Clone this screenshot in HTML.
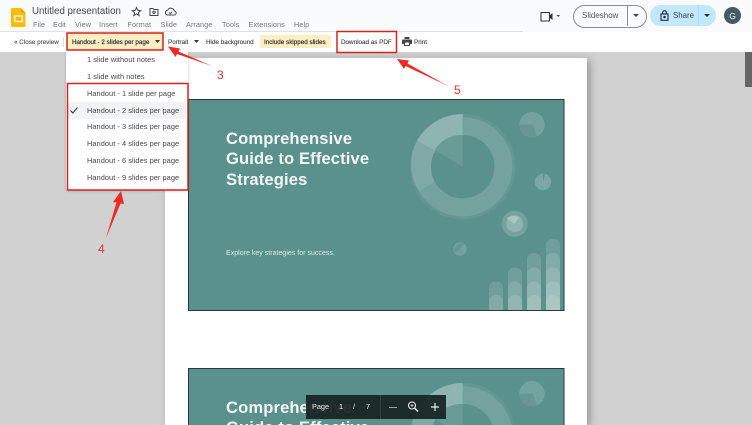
<!DOCTYPE html>
<html><head><meta charset="utf-8">
<style>
html,body{margin:0;padding:0;width:752px;height:425px;overflow:hidden;background:#d1d1d1;font-family:"Liberation Sans",sans-serif}
#w{position:relative;width:752px;height:425px;overflow:hidden;background:#d1d1d1}
.t{position:absolute;white-space:nowrap;line-height:1}
.box{position:absolute}
.mi{position:absolute;left:87px;font-size:7.400px;color:#444746;white-space:nowrap;line-height:10px;letter-spacing:.05px}
.m{font-size:7.400px;color:#7a7d80;top:19.500px;position:absolute;line-height:10px;letter-spacing:.02px}
.tb{position:absolute;font-size:6.300px;color:#3c4043;top:37.500px;line-height:9px;white-space:nowrap;-webkit-text-stroke:.12px #3c4043}
.st{position:absolute;left:226px;font-weight:bold;font-size:16.600px;color:#f3f8f7;white-space:nowrap;line-height:20px;letter-spacing:.12px}
</style></head><body><div id="w">
<div class="box" style="left:0;top:0;width:752px;height:32px;background:#f9fbfd"></div>
<div class="box" style="left:0;top:32px;width:752px;height:20px;background:#fff"></div>
<div class="box" style="left:0;top:31px;width:523px;height:1px;background:#dfe1e5"></div>

<svg class="box" style="left:11px;top:8px" width="15" height="19" viewBox="0 0 15 19"><path d="M1.500 0H10l4.500 4.500V17.500a1.500 1.500 0 0 1-1.500 1.500H1.500A1.500 1.500 0 0 1 0 17.500V1.500A1.500 1.500 0 0 1 1.500 0z" fill="#fbbc04"/><path d="M10 0v4.500h4.500z" fill="#e8a302"/><rect x="3.700" y="8" width="7.600" height="5.500" fill="none" stroke="#fff" stroke-width="1.200"/></svg>
<div class="t" style="left:32px;top:6.500px;font-size:9.700px;color:#444746">Untitled presentation</div>
<svg class="box" style="left:131px;top:6px" width="46" height="11" viewBox="0 0 46 11" fill="none" stroke="#444" stroke-width="1"><path d="M5.500 1.500l1.200 2.800 3 .3-2.300 2 .7 3-2.600-1.600-2.600 1.600.7-3-2.300-2 3-.3z"/><path d="M19 2.500h3l1 1h4v6h-8z"/><circle cx="23" cy="6.300" r="1.200"/><path d="M36 9h7a2 2 0 0 0 .3-4 3.500 3.500 0 0 0-6.600-.8A2.500 2.500 0 0 0 36 9z"/><path d="M38 6.500l1.300 1.200 2-2"/></svg>
<div class="m" style="left:33px">File</div>
<div class="m" style="left:53px">Edit</div>
<div class="m" style="left:75px">View</div>
<div class="m" style="left:99px">Insert</div>
<div class="m" style="left:127.500px">Format</div>
<div class="m" style="left:160.500px">Slide</div>
<div class="m" style="left:186px">Arrange</div>
<div class="m" style="left:222px">Tools</div>
<div class="m" style="left:248.500px">Extensions</div>
<div class="m" style="left:294px">Help</div>

<!-- right header -->
<svg class="box" style="left:540px;top:10px" width="22" height="12" viewBox="0 0 22 12"><path d="M1 2.500h8.500v8.500H1z" fill="none" stroke="#333" stroke-width="1.100"/><path d="M9.500 5.500l3-2.500v7l-3-2.500z" fill="#333"/><path d="M16.500 5h3.500l-1.750 2z" fill="#444"/></svg>
<div class="box" style="left:573px;top:5px;width:72px;height:20.500px;border:1px solid #8a8d90;border-radius:12px;background:#f9fbfd"></div>
<div class="box" style="left:627px;top:5px;width:1px;height:21px;background:#8a8d90"></div>
<div class="t" style="left:582px;top:12px;font-size:7.900px;color:#555;letter-spacing:.05px">Slideshow</div>
<svg class="box" style="left:633px;top:14px" width="6" height="4"><path d="M0 0h6L3 3z" fill="#444"/></svg>
<div class="box" style="left:650px;top:5px;width:66px;height:21px;border-radius:11px;background:#c2e7ff"></div>
<div class="box" style="left:698px;top:5px;width:1px;height:21px;background:#b3dcf7"></div>
<svg class="box" style="left:660px;top:10px" width="9" height="11" viewBox="0 0 9 11" fill="none" stroke="#1c2b33" stroke-width="1.100"><rect x="1" y="4" width="7" height="6.300"/><path d="M2.700 4V2.500a1.800 1.800 0 0 1 3.600 0V4"/><circle cx="4.500" cy="7" r=".7" fill="#1c2b33"/></svg>
<div class="t" style="left:673px;top:12px;font-size:7.900px;color:#38474f">Share</div>
<svg class="box" style="left:704px;top:14px" width="6" height="4"><path d="M0 0h6L3 3z" fill="#1c2b33"/></svg>
<div class="box" style="left:724px;top:7px;width:17px;height:17px;border-radius:50%;background:#445a65"></div>
<div class="t" style="left:724px;top:11.500px;width:17px;text-align:center;font-size:8.500px;color:#fff">G</div>

<!-- toolbar -->
<div class="tb" style="left:14px;color:#555">« Close preview</div>
<div class="box" style="left:63px;top:37px;width:1px;height:10px;background:#dadce0"></div>
<div class="box" style="left:67px;top:33px;width:96px;height:17px;background:#fdefc3"></div>
<div class="tb" style="left:72px;font-size:6.300px;color:#333;-webkit-text-stroke:.2px #333">Handout - 2 slides per page</div>
<svg class="box" style="left:155px;top:40px" width="5" height="3"><path d="M0 0h5L2.500 3z" fill="#333"/></svg>
<div class="tb" style="left:168px">Portrait</div>
<svg class="box" style="left:194px;top:40px" width="5" height="3"><path d="M0 0h5L2.500 3z" fill="#333"/></svg>
<div class="tb" style="left:206px">Hide background</div>
<div class="box" style="left:260px;top:35px;width:71px;height:13px;background:#fdefc3"></div>
<div class="tb" style="left:264px;color:#333;-webkit-text-stroke:.2px #333">Include skipped slides</div>
<div class="tb" style="left:341px">Download as PDF</div>
<svg class="box" style="left:402px;top:37px" width="10" height="9" viewBox="0 0 10 9"><path d="M2.500 0h5v2h-5zM1 2.500h8a1 1 0 0 1 1 1V7H8v2H2V7H0V3.500a1 1 0 0 1 1-1z" fill="#444"/><rect x="3" y="5.500" width="4" height="2.500" fill="#fff"/></svg>
<div class="tb" style="left:414px">Print</div>

<!-- page -->
<div class="box" style="left:165px;top:58px;width:422px;height:367px;background:#fff;box-shadow:3px 2px 8px rgba(0,0,0,.28);clip-path:inset(-10px -12px 0 -10px)"></div>
<div class="box" style="left:745px;top:52px;width:7px;height:35px;background:#666"></div>

<!-- slides -->
<svg class="box" style="left:188px;top:99px" width="377" height="326" viewBox="0 0 377 326">
<defs>
<clipPath id="c"><rect x="0" y="0" width="376" height="211"/></clipPath>
<g id="g">
<rect x=".5" y=".5" width="375.500" height="211" fill="#5b918d" stroke="#263a3a" stroke-width="1"/>
<circle cx="274.700" cy="67.700" r="52.700" fill="#659792"/>
<path d="M274.700 18A49.700 49.700 0 0 1 274.700 117.400 49.700 49.700 0 0 1 231 92L274.700 67.700z" fill="#74a29e"/>
<path d="M274.700 15A52.700 52.700 0 0 0 229 41.700L274.700 67.700z" fill="#8fb5b2"/>
<path d="M229 41.700A49.700 49.700 0 0 0 231 92L274.700 67.700z" fill="#80aaa7"/>
<circle cx="274.700" cy="67.700" r="31.700" fill="#5b918d"/>
<path d="M274.700 36V67.700L246.500 51A31.700 31.700 0 0 1 274.700 36z" fill="#6a9b97"/>
<circle cx="344" cy="25.700" r="12.700" fill="#74a29e"/>
<path d="M331.500 26l13-.5 4.500 12A12.700 12.700 0 0 1 331.500 26z" fill="#669793"/>
<circle cx="355" cy="83" r="8.200" fill="#7aa7a3"/>
<path d="M355 83v-8l2 .3z" fill="#5b918d"/>
<circle cx="326.700" cy="124.700" r="13" fill="#74a29e"/>
<circle cx="326.700" cy="124.700" r="8.500" fill="#8fb5b2"/>
<path d="M326.700 124.700l-8-5a9 9 0 0 1 12-1z" fill="#a7c5c2"/>
<circle cx="272" cy="150" r="6.700" fill="#74a29e"/>
<path d="M272 150l-5 4a6.700 6.700 0 0 1 8-9z" fill="#669793"/>
<g fill="#fff" fill-opacity=".13" clip-path="url(#c)">
<rect x="301" y="196" width="14" height="40" rx="6.500"/><rect x="301" y="182.500" width="14" height="50" rx="6.500"/>
<rect x="320" y="196" width="14" height="40" rx="6.500"/><rect x="320" y="182.500" width="14" height="50" rx="6.500"/><rect x="320" y="168.500" width="14" height="60" rx="6.500"/>
<rect x="339" y="196" width="14" height="40" rx="6.500"/><rect x="339" y="182.500" width="14" height="50" rx="6.500"/><rect x="339" y="168.500" width="14" height="60" rx="6.500"/><rect x="339" y="154" width="14" height="80" rx="6.500"/>
<rect x="358" y="196" width="14" height="40" rx="6.500"/><rect x="358" y="182.500" width="14" height="50" rx="6.500"/><rect x="358" y="168.500" width="14" height="60" rx="6.500"/><rect x="358" y="154" width="14" height="80" rx="6.500"/><rect x="358" y="140" width="14" height="90" rx="6.500"/>
</g>
</g>
</defs>
<use href="#g"/>
<use href="#g" y="269"/>
</svg>
<div class="st" style="top:129px">Comprehensive</div>
<div class="st" style="top:149px">Guide to Effective</div>
<div class="st" style="top:169.500px">Strategies</div>
<div class="t" style="left:226px;top:250px;font-size:7.050px;color:#dce9e7">Explore key strategies for success.</div>
<div class="st" style="top:398px">Comprehensive</div>
<div class="st" style="top:418px;height:7px;overflow:hidden">Guide to Effective</div>

<!-- pdf toolbar -->
<div class="box" style="left:306px;top:395px;width:140px;height:24px;background:rgba(24,36,35,.94)"></div>
<div class="box" style="left:380px;top:395px;width:1px;height:24px;background:#34403f"></div>
<div class="t" style="left:312px;top:403px;font-size:7.300px;color:#e8eaea">Page</div>
<div class="t" style="left:339px;top:403px;font-size:7.300px;color:#fff">1</div>
<div class="t" style="left:353px;top:403px;font-size:7.300px;color:#e8eaea">/</div>
<div class="t" style="left:366px;top:403px;font-size:7.300px;color:#fff">7</div>
<svg class="box" style="left:388px;top:400px" width="54" height="14" viewBox="0 0 54 14" fill="none" stroke="#e8eaea"><path d="M1 7.500h8" stroke="#9aa3a2" stroke-width="1"/><circle cx="24" cy="5.500" r="3.500" stroke-width="1.100"/><path d="M26.500 8l3.500 3.500" stroke-width="1.500"/><path d="M22.500 5.500h3M24 4v3" stroke-width=".7"/><path d="M43 7h8M47 3v8" stroke-width="1.200"/></svg>

<!-- menu -->
<div class="box" style="left:66px;top:50px;width:122px;height:140px;background:#fff;box-shadow:0 1px 3px rgba(0,0,0,.2)"></div>
<div class="box" style="left:68px;top:102px;width:118px;height:17px;background:#f1f3f4"></div>
<div class="mi" style="top:55px">1 slide without notes</div>
<div class="mi" style="top:71.500px">1 slide with notes</div>
<div class="mi" style="top:88.500px">Handout - 1 slide per page</div>
<div class="mi" style="top:105.500px">Handout - 2 slides per page</div>
<div class="mi" style="top:122px">Handout - 3 slides per page</div>
<div class="mi" style="top:139px">Handout - 4 slides per page</div>
<div class="mi" style="top:156px">Handout - 6 slides per page</div>
<div class="mi" style="top:173px">Handout - 9 slides per page</div>
<svg class="box" style="left:70px;top:107px" width="8" height="7"><path d="M.5 3.500L2.800 6 7.500.5" fill="none" stroke="#333" stroke-width="1"/></svg>

<!-- annotations -->
<svg class="box" style="left:0;top:0" width="752" height="425" fill="none">
<rect x="67" y="33" width="96" height="17" stroke="#d6231f" stroke-width="1.500"/>
<rect x="337" y="31.500" width="59.500" height="21" stroke="#d6231f" stroke-width="1.500"/>
<rect x="67.500" y="83.500" width="120.500" height="106.500" stroke="#d6231f" stroke-width="1.500"/>
<path d="M168 46.500L180 48.500 178.500 51.500 212 66 177 54 175.500 57z" fill="#ee2a24"/>
<path d="M397 59L409 60.500 407.500 63.500 448 86 405.500 66 404 69z" fill="#ee2a24"/>
<path d="M121 191L124 204 120.500 203.500 106 238 116.500 202.500 113 202z" fill="#ee2a24"/>
</svg>
<div class="t" style="left:217px;top:69px;font-size:12px;color:#e3342c">3</div>
<div class="t" style="left:98px;top:243px;font-size:12px;color:#e3342c">4</div>
<div class="t" style="left:454px;top:84px;font-size:12px;color:#e3342c">5</div>
</div></body></html>
